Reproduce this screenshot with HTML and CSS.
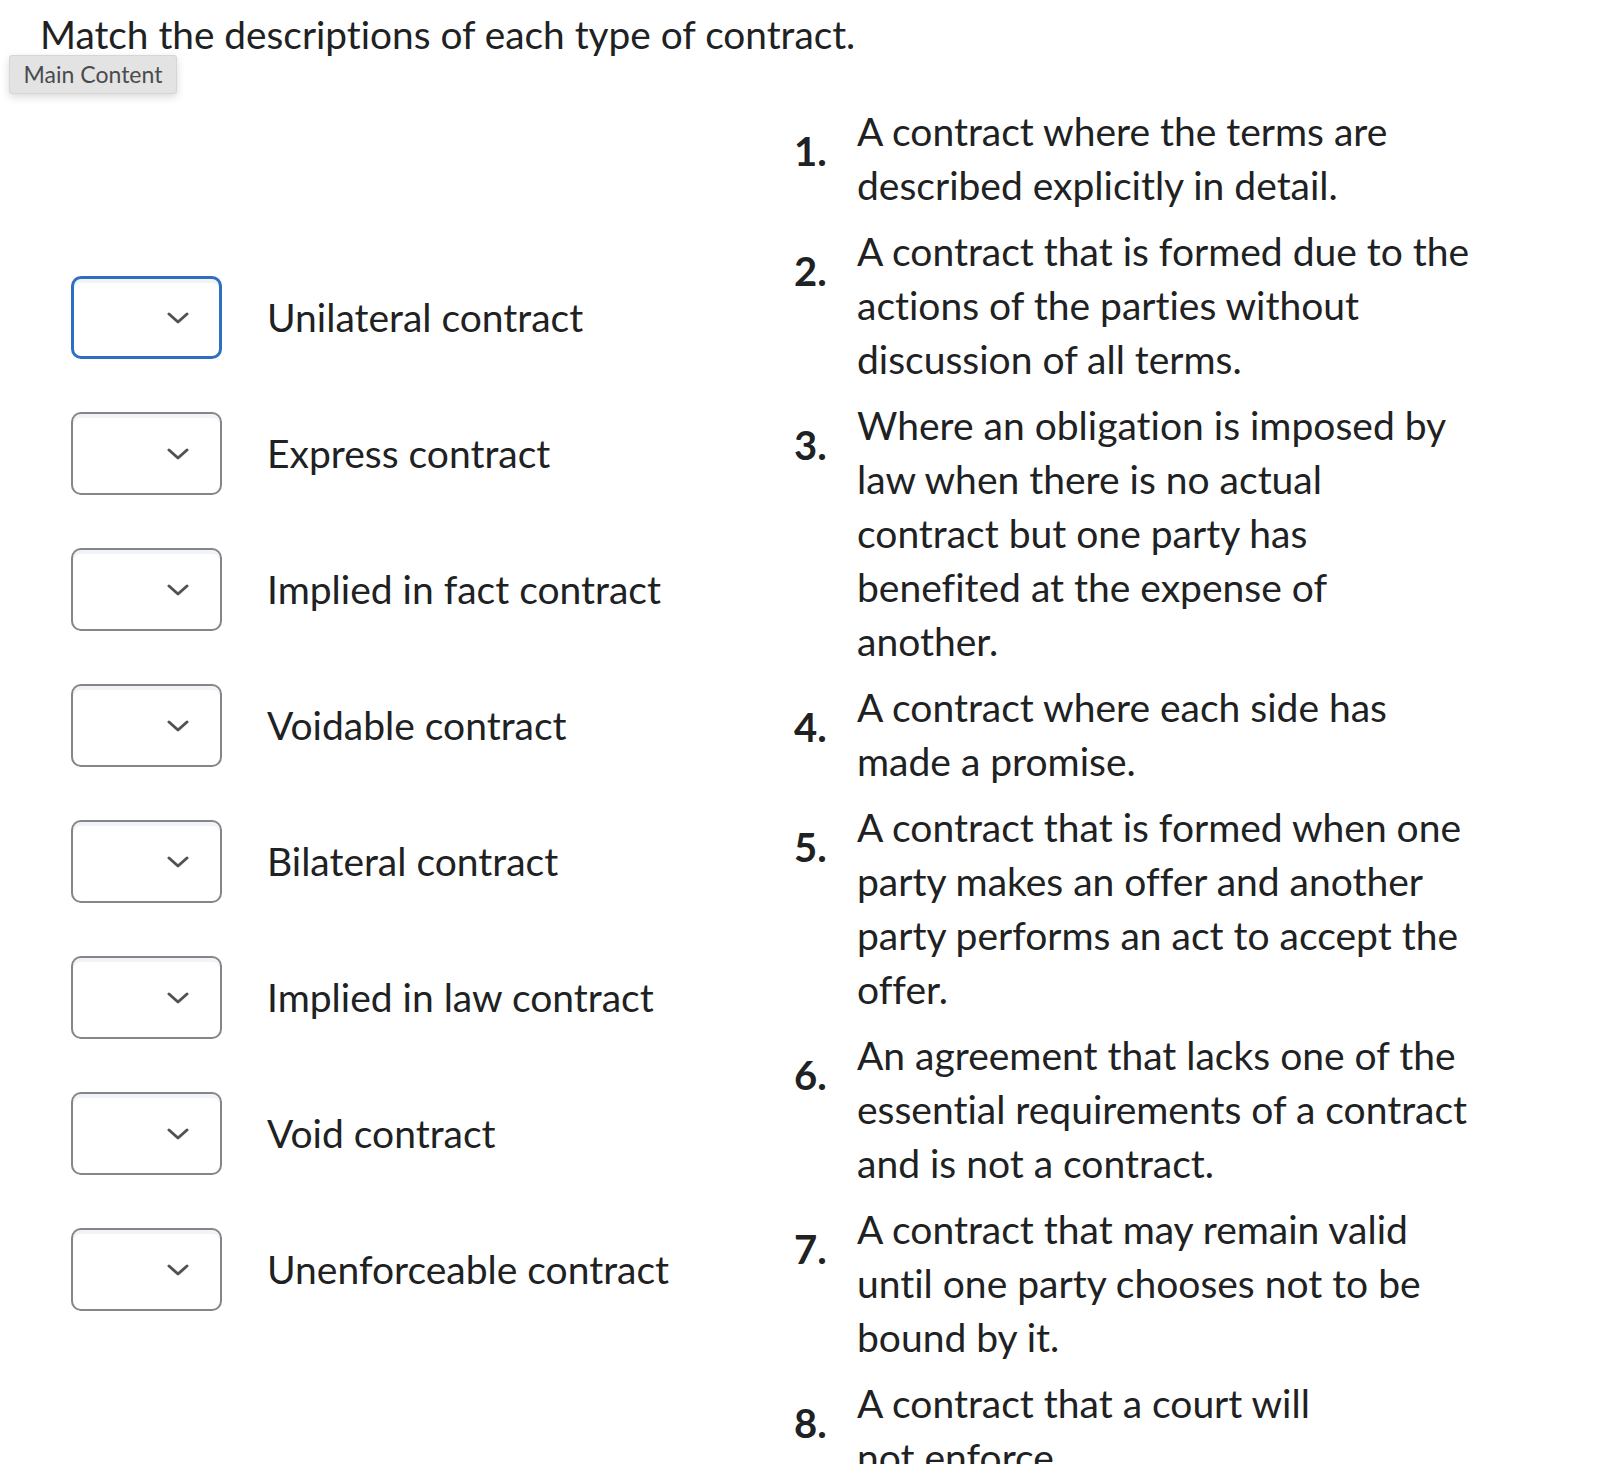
FILE: index.html
```html
<!DOCTYPE html>
<html lang="en">
<head>
  <meta charset="UTF-8">
  <title>Match the descriptions of each type of contract.</title>
  <link rel="stylesheet" href="styles.css">
</head>
<body>

  <a class="skip-link" href="#main">Main Content</a>
  <h1 class="question">Match the descriptions of each type of contract.</h1>

  <div class="matching" id="main">
    <div class="choices">
      <div class="choice-row">
        <span class="select-wrap">
          <select class="match-select is-focused" aria-label="Unilateral contract"><option></option></select>
          <svg class="chevron" width="22" height="12" viewBox="0 0 22 12"><path d="M2 2l9 8 9-8" fill="none" stroke="#4f5356" stroke-width="3" stroke-linecap="round" stroke-linejoin="round"/></svg>
        </span>
        <span class="choice-label">Unilateral contract</span>
      </div>
      <div class="choice-row">
        <span class="select-wrap">
          <select class="match-select" aria-label="Express contract"><option></option></select>
          <svg class="chevron" width="22" height="12" viewBox="0 0 22 12"><path d="M2 2l9 8 9-8" fill="none" stroke="#4f5356" stroke-width="3" stroke-linecap="round" stroke-linejoin="round"/></svg>
        </span>
        <span class="choice-label">Express contract</span>
      </div>
      <div class="choice-row">
        <span class="select-wrap">
          <select class="match-select" aria-label="Implied in fact contract"><option></option></select>
          <svg class="chevron" width="22" height="12" viewBox="0 0 22 12"><path d="M2 2l9 8 9-8" fill="none" stroke="#4f5356" stroke-width="3" stroke-linecap="round" stroke-linejoin="round"/></svg>
        </span>
        <span class="choice-label">Implied in fact contract</span>
      </div>
      <div class="choice-row">
        <span class="select-wrap">
          <select class="match-select" aria-label="Voidable contract"><option></option></select>
          <svg class="chevron" width="22" height="12" viewBox="0 0 22 12"><path d="M2 2l9 8 9-8" fill="none" stroke="#4f5356" stroke-width="3" stroke-linecap="round" stroke-linejoin="round"/></svg>
        </span>
        <span class="choice-label">Voidable contract</span>
      </div>
      <div class="choice-row">
        <span class="select-wrap">
          <select class="match-select" aria-label="Bilateral contract"><option></option></select>
          <svg class="chevron" width="22" height="12" viewBox="0 0 22 12"><path d="M2 2l9 8 9-8" fill="none" stroke="#4f5356" stroke-width="3" stroke-linecap="round" stroke-linejoin="round"/></svg>
        </span>
        <span class="choice-label">Bilateral contract</span>
      </div>
      <div class="choice-row">
        <span class="select-wrap">
          <select class="match-select" aria-label="Implied in law contract"><option></option></select>
          <svg class="chevron" width="22" height="12" viewBox="0 0 22 12"><path d="M2 2l9 8 9-8" fill="none" stroke="#4f5356" stroke-width="3" stroke-linecap="round" stroke-linejoin="round"/></svg>
        </span>
        <span class="choice-label">Implied in law contract</span>
      </div>
      <div class="choice-row">
        <span class="select-wrap">
          <select class="match-select" aria-label="Void contract"><option></option></select>
          <svg class="chevron" width="22" height="12" viewBox="0 0 22 12"><path d="M2 2l9 8 9-8" fill="none" stroke="#4f5356" stroke-width="3" stroke-linecap="round" stroke-linejoin="round"/></svg>
        </span>
        <span class="choice-label">Void contract</span>
      </div>
      <div class="choice-row">
        <span class="select-wrap">
          <select class="match-select" aria-label="Unenforceable contract"><option></option></select>
          <svg class="chevron" width="22" height="12" viewBox="0 0 22 12"><path d="M2 2l9 8 9-8" fill="none" stroke="#4f5356" stroke-width="3" stroke-linecap="round" stroke-linejoin="round"/></svg>
        </span>
        <span class="choice-label">Unenforceable contract</span>
      </div>
    </div>

    <ol class="answers">
      <li class="answer">
        <span class="answer-num">1.</span>
        <span class="answer-text">A contract where the terms are described explicitly in detail.</span>
      </li>
      <li class="answer">
        <span class="answer-num">2.</span>
        <span class="answer-text">A contract that is formed due to the actions of the parties without discussion of all terms.</span>
      </li>
      <li class="answer">
        <span class="answer-num">3.</span>
        <span class="answer-text">Where an obligation is imposed by law when there is no actual contract but one party has benefited at the expense of another.</span>
      </li>
      <li class="answer">
        <span class="answer-num">4.</span>
        <span class="answer-text">A contract where each side has made a promise.</span>
      </li>
      <li class="answer">
        <span class="answer-num">5.</span>
        <span class="answer-text">A contract that is formed when one party makes an offer and another party performs an act to accept the offer.</span>
      </li>
      <li class="answer">
        <span class="answer-num">6.</span>
        <span class="answer-text">An agreement that lacks one of the essential requirements of a contract and is not a contract.</span>
      </li>
      <li class="answer">
        <span class="answer-num">7.</span>
        <span class="answer-text">A contract that may remain valid until one party chooses not to be bound by it.</span>
      </li>
      <li class="answer">
        <span class="answer-num">8.</span>
        <span class="answer-text">A contract that a court will<br>not enforce.</span>
      </li>
    </ol>
  </div>

</body>
</html>
```

FILE: styles.css
```css
body {
  margin: 0;
  font-family: Lato, "Open Sans", sans-serif;
  color: #202122;
  background: #fff;
  font-variant-ligatures: none;
}
.question {
  margin: 11px 0 0 40px;
  font-size: 38.8px;
  font-weight: normal;
  line-height: 1.2;
}
.skip-link {
  position: absolute;
  top: 55px;
  left: 9px;
  width: 168px;
  height: 39px;
  box-sizing: border-box;
  padding-top: 4px;
  font-size: 23px;
  color: #494c4e;
  text-align: center;
  text-decoration: none;
  background-color: #e3e3e3;
  border: 1px solid #d6d6d6;
  border-radius: 3px;
  box-shadow: 0 3px 8px rgba(0, 0, 0, 0.15);
}
.matching {
  display: flex;
  margin-top: 46px;
}
.choices {
  width: 723px;
  padding: 172px 0 0 71px;
  display: flex;
  flex-direction: column;
  gap: 53px;
}
.choice-row {
  display: flex;
  align-items: center;
  height: 83px;
}
.select-wrap {
  position: relative;
  width: 151px;
  height: 83px;
  flex-shrink: 0;
}
.match-select {
  appearance: none;
  width: 100%;
  height: 100%;
  margin: 0;
  background: #fff;
  border: 2px solid #848789;
  border-radius: 10px;
  box-shadow: inset 0 4px 0 0 rgba(185, 194, 208, 0.2);
}
.match-select.is-focused {
  border: 3px solid #2f6fc0;
}
.chevron {
  position: absolute;
  top: 36px;
  left: 96px;
  pointer-events: none;
}
.choice-label {
  margin-left: 45px;
  font-size: 39px;
}
.answers {
  list-style: none;
  margin: 0;
  padding: 0;
  width: 680px;
  display: flex;
  flex-direction: column;
  gap: 12px;
}
.answer {
  display: flex;
}
.answer-num {
  width: 63px;
  padding-top: 20px;
  font-size: 40px;
  font-weight: bold;
  line-height: 54px;
}
.answer-text {
  width: 615px;
  font-size: 39px;
  line-height: 54px;
}
```
